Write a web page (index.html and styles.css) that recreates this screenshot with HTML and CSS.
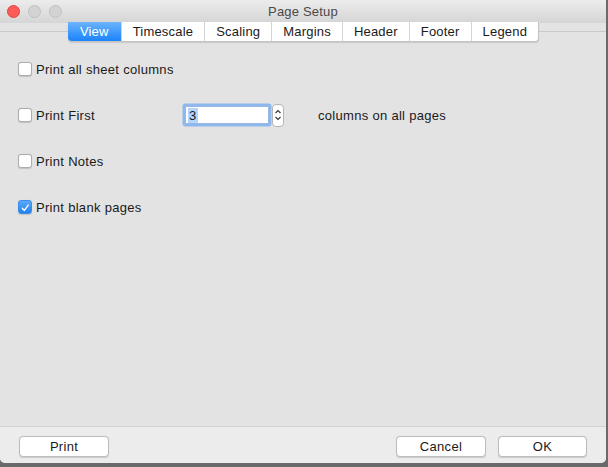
FILE: index.html
```html
<!DOCTYPE html>
<html lang="en">
<head>
    <meta charset="UTF-8" />
    <title>Page Setup</title>
    <link rel="stylesheet" href="styles.css">
</head>
<body>
    <div class="window">
        <div class="titlebar">
            <div class="lights">
                <span class="light close"></span>
                <span class="light"></span>
                <span class="light"></span>
            </div>
            <div class="title">Page Setup</div>
        </div>

        <div class="tabstrip">
            <div class="tabs">
                <div class="tab active">View</div>
                <div class="tab">Timescale</div>
                <div class="tab">Scaling</div>
                <div class="tab">Margins</div>
                <div class="tab">Header</div>
                <div class="tab">Footer</div>
                <div class="tab">Legend</div>
            </div>
        </div>

        <div class="content">
            <div class="row">
                <span class="check"></span>
                <span class="label">Print all sheet columns</span>
            </div>

            <div class="row">
                <div class="label-cell">
                    <span class="check"></span>
                    <span class="label">Print First</span>
                </div>
                <div class="field"><span class="selected">3</span></div>
                <div class="stepper">
                    <svg width="10" height="20" viewBox="0 0 10 20">
                        <path d="M2.5 8 L5 5.5 L7.5 8" fill="none" stroke="#333" stroke-width="1.1"/>
                        <path d="M2.5 12 L5 14.5 L7.5 12" fill="none" stroke="#333" stroke-width="1.1"/>
                    </svg>
                </div>
                <span class="label after">columns on all pages</span>
            </div>

            <div class="row">
                <span class="check"></span>
                <span class="label">Print Notes</span>
            </div>

            <div class="row">
                <span class="check checked">
                    <svg width="14" height="14" viewBox="0 0 14 14">
                        <path d="M3.8 7.4 L6.2 9.8 L10.8 3.6" fill="none" stroke="#fff" stroke-width="1.6" stroke-linecap="round" stroke-linejoin="round"/>
                    </svg>
                </span>
                <span class="label">Print blank pages</span>
            </div>
        </div>

        <div class="footer">
            <button class="btn">Print</button>
            <div class="footer-right">
                <button class="btn">Cancel</button>
                <button class="btn ok">OK</button>
            </div>
        </div>
    </div>
</body>
</html>
```

FILE: styles.css
```css
body {
    margin: 0;
    background: #6a6a6a;
    font-family: 'Liberation Sans', Arial, sans-serif;
    font-size: 13px;
    letter-spacing: 0.3px;
    color: #1a1a1a;
    width: 608px;
    height: 467px;
    overflow: hidden;
}

.window {
    width: 606px;
    height: 463px;
    background: #e3e3e3;
    border-radius: 0 0 5px 5px;
    display: flex;
    flex-direction: column;
    overflow: hidden;
}

.titlebar {
    height: 22px;
    background: linear-gradient(to bottom, #ececec, #d6d6d6);
    display: flex;
    align-items: center;
    position: relative;
}

.lights {
    display: flex;
    gap: 8px;
    padding-left: 7px;
}

.light {
    width: 11px;
    height: 11px;
    border-radius: 50%;
    background: #d3d3d3;
    border: 0.5px solid #c0c0c0;
}

.light.close {
    background: #fc5b57;
    border-color: #e0443e;
}

.title {
    position: absolute;
    left: 0;
    right: 0;
    text-align: center;
    color: #4a4a4a;
    letter-spacing: 0.2px;
}

.tabstrip {
    height: 20px;
    display: flex;
    justify-content: center;
    padding-left: 1px;
    background: linear-gradient(to bottom, #d6d6d6 0, #d6d6d6 1px, #e3e3e3 1px, #e3e3e3 9px, #c9c9c9 9px, #c9c9c9 10px, #e3e3e3 10px);
}

.tabs {
    display: flex;
    background: #fff;
    border: 1px solid #c3c3c3;
    border-top: none;
    border-radius: 0 0 4px 4px;
    box-shadow: 0 1px 1px rgba(0,0,0,0.12);
    height: 19px;
}

.tab {
    padding: 0 11px;
    line-height: 19px;
    letter-spacing: 0.2px;
    border-left: 1px solid #d4d4d4;
    color: #1a1a1a;
}

.tab:first-child {
    border-left: none;
}

.tab.active {
    background: linear-gradient(to bottom, #6cb4fb, #1b83fb);
    color: #fff;
    border-radius: 0 0 0 4px;
    margin-left: -1px;
    padding: 0 12px;
}

.content {
    flex: 1;
    display: flex;
    flex-direction: column;
    gap: 24px;
    padding: 16px 0 0 18px;
}

.row {
    display: flex;
    align-items: center;
    height: 22px;
}

.label-cell {
    display: flex;
    align-items: center;
    width: 167px;
}

.check {
    width: 14px;
    height: 14px;
    box-sizing: border-box;
    background: #fff;
    border: 0.5px solid #adadad;
    border-radius: 3px;
    box-shadow: 0 0.5px 1px rgba(0,0,0,0.15);
    margin-right: 4px;
    display: flex;
}

.check.checked {
    background: linear-gradient(to bottom, #5aa9fa, #2180f2);
    border-color: #3a8fe8;
}

.field {
    width: 84px;
    height: 18px;
    background: #fff;
    border: 1px solid #9ab9e2;
    box-shadow: 0 0 0 2.5px #8db8ee;
    border-radius: 1px;
    display: flex;
    align-items: center;
    padding-left: 2px;
    box-sizing: border-box;
}

.selected {
    background: #b4d6fe;
    line-height: 15px;
    padding: 0 1px;
}

.stepper {
    width: 10px;
    height: 21px;
    margin-left: 3px;
    background: #fff;
    border: 0.5px solid #b5b5b5;
    border-radius: 4px;
    display: flex;
    align-items: center;
}

.label.after {
    margin-left: 34px;
}

.footer {
    height: 37px;
    border-top: 1px solid #d2d2d2;
    background: #ececec;
    display: flex;
    justify-content: space-between;
    align-items: flex-start;
    padding: 9px 19px 0 19px;
    box-sizing: border-box;
}

.footer-right {
    display: flex;
    gap: 12px;
}

.btn {
    font-family: inherit;
    font-size: 13px;
    letter-spacing: 0.3px;
    color: #1a1a1a;
    width: 90px;
    height: 21px;
    background: #fff;
    border: 0.5px solid #bdbdbd;
    border-radius: 4px;
    box-shadow: 0 0.5px 1px rgba(0,0,0,0.15);
    padding: 0;
}

.btn.ok {
    width: 89px;
}
```
